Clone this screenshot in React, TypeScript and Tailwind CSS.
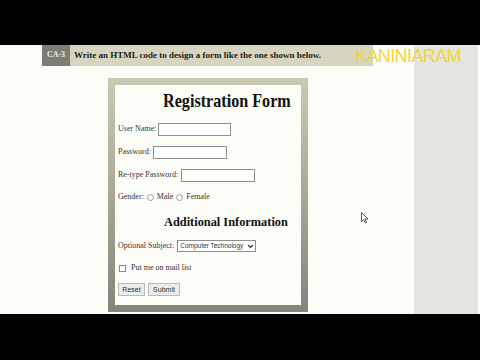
export default function App() {
  const serif = { fontFamily: '"Liberation Serif", "DejaVu Serif", serif' };
  const sans = { fontFamily: '"Liberation Sans", Arial, sans-serif' };
  return (
    <div className="w-[480px] h-[360px] bg-black flex flex-col overflow-hidden whitespace-nowrap" style={serif}>
      <div className="h-[45px] shrink-0" />
      <div className="h-[269px] flex bg-[#fdfdf8] pl-[3px] pr-[2px]">
        <div className="w-[411px] relative bg-[#fdfdf8]">
          {/* header bar */}
          <div className="flex h-[21px]">
            <div className="ml-[39px] w-[28px] bg-[#7e7d74] text-[#ececec] text-[8px] font-bold flex items-start justify-center pt-[4px]">CA-3</div>
            <div className="w-[303px] bg-[#d6d5c0] text-[#1c1c1c] text-[9px] font-bold pl-[4px] pt-[5px] leading-[10px]">
              Write an HTML code to design a form like the one shown below.
            </div>
          </div>
          <div className="absolute left-[352px] top-[1px] text-[18px] text-[#f2d53a] leading-[20px] tracking-[-0.6px]" style={sans}>KANINIARAM</div>

          {/* form frame */}
          <div className="ml-[105px] mt-[12px] w-[200px] h-[234px] p-[7px] bg-gradient-to-b from-[#cac9b2] via-[#a9a896] to-[#84847a]">
            <div className="w-full h-full bg-[#fdfdf8] pl-[3px] text-[8px] text-[#333] leading-[10px]">
              <div className="pt-[6px] pl-[45px] text-[19px] font-bold text-[#111] leading-[20px]">
                <span className="inline-block origin-left scale-x-[0.85]">Registration Form</span>
              </div>
              <div className="mt-[11px] flex items-center h-[14px]">
                <span>User Name:</span>
                <span className="ml-[2px] w-[73px] h-[13px] border border-[#8e8e8e] bg-white" />
              </div>
              <div className="mt-[9px] flex items-center h-[14px]">
                <span>Password:</span>
                <span className="ml-[2px] w-[74px] h-[13px] border border-[#8e8e8e] bg-white" />
              </div>
              <div className="mt-[9px] flex items-center h-[14px]">
                <span>Re-type Password:</span>
                <span className="ml-[3px] w-[74px] h-[13px] border border-[#8e8e8e] bg-white" />
              </div>
              <div className="mt-[8px] flex items-center h-[14px]">
                <span>Gender:</span>
                <span className="ml-[3px] w-[7px] h-[7px] rounded-full border border-[#999] bg-white" />
                <span className="ml-[3px]">Male</span>
                <span className="ml-[3px] w-[7px] h-[7px] rounded-full border border-[#999] bg-white" />
                <span className="ml-[3px]">Female</span>
              </div>
              <div className="mt-[10px] pl-[46px] text-[13px] font-bold text-[#111] leading-[16px]">
                <span className="inline-block origin-left scale-x-[0.95]">Additional Information</span>
              </div>
              <div className="mt-[9px] flex items-center h-[14px]">
                <span>Optional Subject:</span>
                <span className="ml-[3px] w-[79px] h-[12px] border border-[#8e8e8e] bg-white flex items-center justify-between pl-[2px] pr-[1px] text-[6.5px]" style={sans}>
                  <span>Computer Technology</span>
                  <svg width="7" height="5" viewBox="0 0 7 5"><path d="M1 1l2.5 2.5L6 1" stroke="#333" strokeWidth="1.2" fill="none" /></svg>
                </span>
              </div>
              <div className="mt-[8px] flex items-center h-[14px]">
                <span className="ml-[1px] w-[7px] h-[7px] border border-[#888] bg-white" />
                <span className="ml-[5px]">Put me on mail list</span>
              </div>
              <div className="mt-[8px] flex items-center gap-[3px] text-[7px]" style={sans}>
                <span className="w-[27px] h-[13px] border border-[#bbb] bg-[#ececec] flex items-center justify-center">Reset</span>
                <span className="w-[32px] h-[13px] border border-[#bbb] bg-[#ececec] flex items-center justify-center">Submit</span>
              </div>
            </div>
          </div>

          {/* mouse cursor */}
          <svg className="absolute left-[358px] top-[167px]" width="8" height="12" viewBox="0 0 8 12">
            <path d="M0.5 0.5v9l2.2-2 1.6 3.5 1.3-.6-1.6-3.4h3z" fill="#fff" stroke="#333" strokeWidth="0.8" />
          </svg>
        </div>
        <div className="flex-1 bg-[#e4e4e0]" />
      </div>
      <div className="flex-1" />
    </div>
  );
}
